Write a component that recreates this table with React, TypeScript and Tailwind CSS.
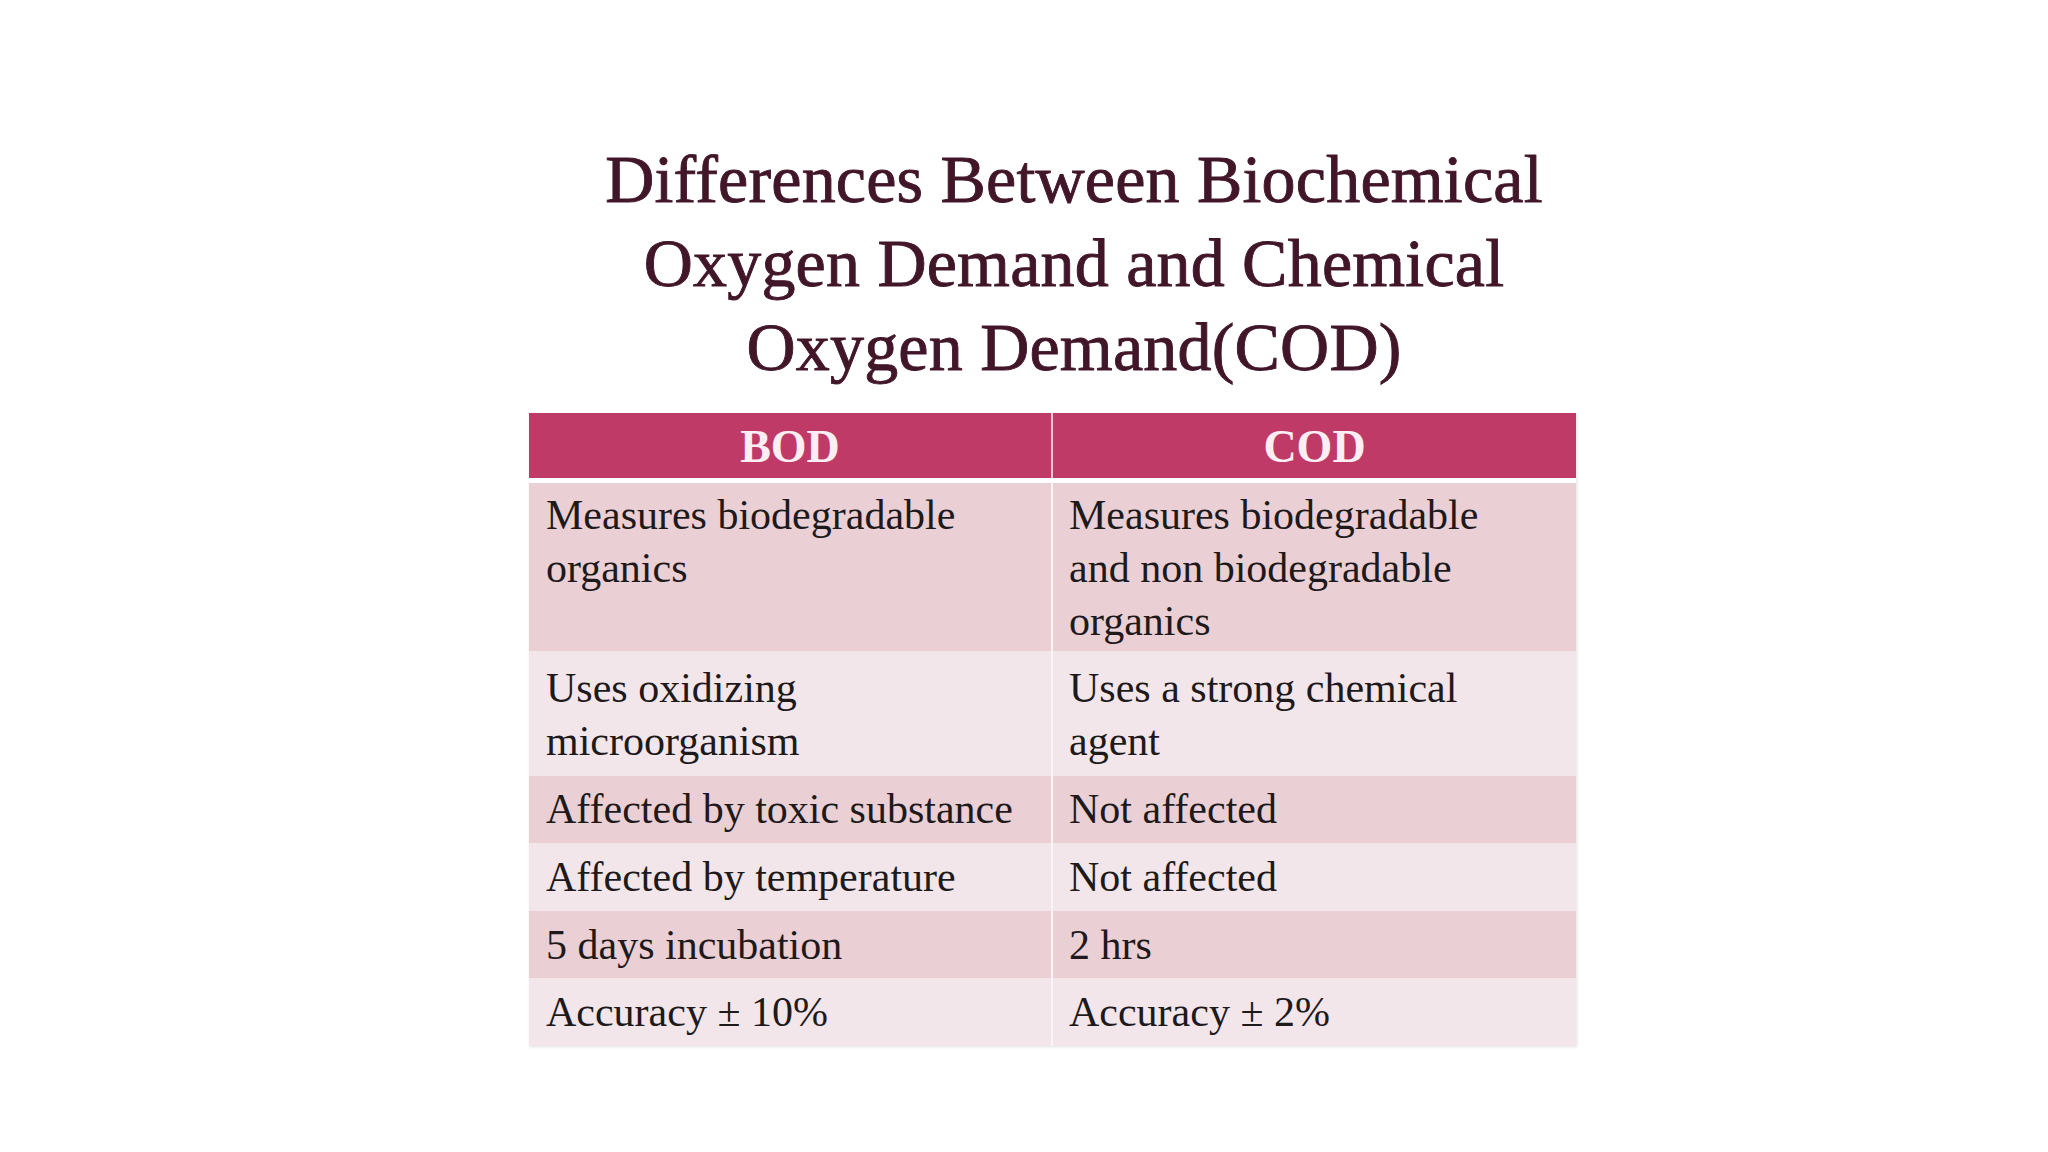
const rows = [
  {
    bod: ['Measures biodegradable', 'organics'],
    cod: ['Measures biodegradable', 'and non biodegradable', 'organics'],
    h: 'h-[168px]',
    pt: 'pt-[6px]',
    bg: 'bg-[#eacfd5]',
  },
  {
    bod: ['Uses oxidizing', 'microorganism'],
    cod: ['Uses a strong chemical', 'agent'],
    h: 'h-[125px]',
    pt: 'pt-[11px]',
    bg: 'bg-[#f2e6ea]',
  },
  {
    bod: ['Affected by toxic substance'],
    cod: ['Not affected'],
    h: 'h-[67px]',
    pt: 'pt-[7px]',
    bg: 'bg-[#eacfd5]',
  },
  {
    bod: ['Affected by temperature'],
    cod: ['Not affected'],
    h: 'h-[68px]',
    pt: 'pt-[8px]',
    bg: 'bg-[#f2e6ea]',
  },
  {
    bod: ['5 days incubation'],
    cod: ['2 hrs'],
    h: 'h-[67px]',
    pt: 'pt-[8px]',
    bg: 'bg-[#eacfd5]',
  },
  {
    bod: ['Accuracy \u00b1 10%'],
    cod: ['Accuracy \u00b1 2%'],
    h: 'h-[68px]',
    pt: 'pt-[8px]',
    bg: 'bg-[#f2e6ea]',
  },
]

const Cell = ({ lines, className }: { lines: string[]; className: string }) => (
  <div className={className}>
    {lines.map((line, i) => (
      <div key={i}>{line}</div>
    ))}
  </div>
)

const App = () => {
  return (
    <main
      className="w-full h-[1152px] bg-white pl-[529px] pt-[137px]"
      style={{ fontFamily: '"Liberation Serif", "Times New Roman", serif' }}
    >
      <h1 className="w-[1090px] text-center text-[68px] leading-[84px] tracking-[0.2px] text-[#421629] [-webkit-text-stroke:0.9px_#421629]">
        Differences Between Biochemical
        <br />
        Oxygen Demand and Chemical
        <br />
        Oxygen Demand(COD)
      </h1>

      <section className="mt-[24px] w-[1047px] shadow-[1px_1px_3px_rgba(0,0,0,0.12)]">
        <div className="grid grid-cols-[522px_2px_523px] h-[65px] bg-[#bf3a67] border-b-[5px] border-white box-content">
          <div className="flex items-center justify-center text-[46px] font-bold text-[#fdeef4] leading-none pt-[2px]">
            BOD
          </div>
          <div className="bg-[#f6c6d8]" />
          <div className="flex items-center justify-center text-[46px] font-bold text-[#fdeef4] leading-none pt-[2px]">
            COD
          </div>
        </div>
        {rows.map((row, i) => (
          <div
            key={i}
            className={`grid grid-cols-[522px_2px_523px] ${row.h} ${row.bg} text-[42px] leading-[53px] text-[#1e1a1c]`}
          >
            <Cell lines={row.bod} className={`pl-[17px] ${row.pt}`} />
            <div className="bg-[#fbf4f6]" />
            <Cell lines={row.cod} className={`pl-[16px] ${row.pt}`} />
          </div>
        ))}
      </section>
    </main>
  )
}

export default App
